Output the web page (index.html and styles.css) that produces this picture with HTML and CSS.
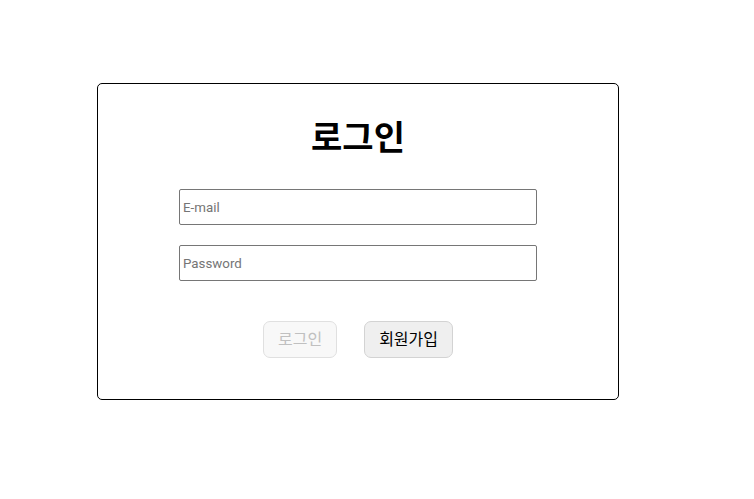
FILE: index.html
```html
<!DOCTYPE html>
<html lang="ko">
<head>
<meta charset="utf-8">
<title>로그인</title>
<link rel="stylesheet" href="styles.css">
</head>
<body>
<div class="card">
  <h1 class="title">로그인</h1>
  <form class="form">
    <input class="field" type="email" placeholder="E-mail">
    <input class="field" type="password" placeholder="Password">
    <div class="actions">
      <button class="btn" type="button" disabled>로그인</button>
      <button class="btn" type="button">회원가입</button>
    </div>
  </form>
</div>
</body>
</html>
```
FILE: styles.css
```css
html, body {
  margin: 0;
  padding: 0;
  background: #fff;
}
body {
  font-family: "Noto Sans CJK KR", "Liberation Sans", sans-serif;
  padding: 83px 0 0 97px;
}
.card {
  box-sizing: border-box;
  width: 522px;
  height: 317px;
  border: 1px solid #000;
  border-radius: 5px;
  display: flex;
  flex-direction: column;
  align-items: center;
}
.title {
  margin: 30px 0 0;
  font-size: 34px;
  font-weight: 700;
  line-height: 44px;
  color: #000;
}
.form {
  margin-top: 31px;
  display: flex;
  flex-direction: column;
  align-items: center;
  gap: 20px;
}
.field {
  box-sizing: border-box;
  width: 358px;
  height: 36px;
  margin: 0;
  padding: 0 3px;
  border: 1px solid #767676;
  border-radius: 2px;
  font-family: Roboto, "Liberation Sans", sans-serif;
  font-size: 13.33px;
  color: #000;
}
.field::placeholder {
  color: #757575;
}
.actions {
  margin-top: 20px;
  display: flex;
  gap: 27px;
}
.btn {
  box-sizing: border-box;
  height: 37px;
  padding: 0 14px 3px;
  border: 1px solid #d3d3d3;
  border-radius: 7px;
  background: #efefef;
  color: #000;
  font-family: "Noto Sans CJK KR", sans-serif;
  font-size: 16px;
}
.btn:disabled {
  background: #f8f8f8;
  border-color: #e0e0e0;
  color: #c0c0c0;
}
```
